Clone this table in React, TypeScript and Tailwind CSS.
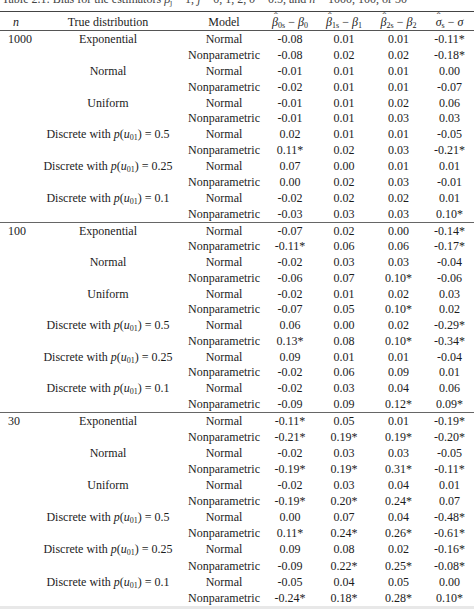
import React from "react";

type Row = {
  n?: string;
  dist?: React.ReactNode;
  model: string;
  vals: string[];
};

const cols = "grid grid-cols-[32px_152px_80px_52px_56px_53px_49px]";

const P = ({ v }: { v: string }) => (
  <span className="whitespace-nowrap">
    Discrete with <i>p</i>(<i>u</i>
    <sub className="text-[8px]">01</sub>) = {v}
  </span>
);

const Hat = ({ sub, base }: { sub: string; base: string }) => (
  <span className="whitespace-nowrap">
    <span className="relative inline-block">
      <i>β</i>
      <span className="absolute left-[2px] -top-[4px] text-[11px] leading-[11px]">ˆ</span>
    </span>
    <sub className="text-[8px]">{sub}</sub> − <i>β</i>
    <sub className="text-[8px]">{base}</sub>
  </span>
);

const dists = (n: string) => [
  { n, dist: "Exponential" },
  {},
  { dist: "Normal" },
  {},
  { dist: "Uniform" },
  {},
  { dist: <P v="0.5" /> },
  {},
  { dist: <P v="0.25" /> },
  {},
  { dist: <P v="0.1" /> },
  {},
];

const data: { n: string; h: string; vals: string[][] }[] = [
  {
    n: "1000",
    h: "h-[15.9px]",
    vals: [
      ["-0.08", "0.01", "0.01", "-0.11*"],
      ["-0.08", "0.02", "0.02", "-0.18*"],
      ["-0.01", "0.01", "0.01", "0.00"],
      ["-0.02", "0.01", "0.01", "-0.07"],
      ["-0.01", "0.01", "0.02", "0.06"],
      ["-0.01", "0.01", "0.03", "0.03"],
      ["0.02", "0.01", "0.01", "-0.05"],
      ["0.11*", "0.02", "0.03", "-0.21*"],
      ["0.07", "0.00", "0.01", "0.01"],
      ["0.00", "0.02", "0.03", "-0.01"],
      ["-0.02", "0.02", "0.02", "0.01"],
      ["-0.03", "0.03", "0.03", "0.10*"],
    ],
  },
  {
    n: "100",
    h: "h-[15.75px]",
    vals: [
      ["-0.07", "0.02", "0.00", "-0.14*"],
      ["-0.11*", "0.06", "0.06", "-0.17*"],
      ["-0.02", "0.03", "0.03", "-0.04"],
      ["-0.06", "0.07", "0.10*", "-0.06"],
      ["-0.02", "0.01", "0.02", "0.03"],
      ["-0.07", "0.05", "0.10*", "0.02"],
      ["0.06", "0.00", "0.02", "-0.29*"],
      ["0.13*", "0.08", "0.10*", "-0.34*"],
      ["0.09", "0.01", "0.01", "-0.04"],
      ["-0.02", "0.06", "0.09", "0.01"],
      ["-0.02", "0.03", "0.04", "0.06"],
      ["-0.09", "0.09", "0.12*", "0.09*"],
    ],
  },
  {
    n: "30",
    h: "h-[16.1px]",
    vals: [
      ["-0.11*", "0.05", "0.01", "-0.19*"],
      ["-0.21*", "0.19*", "0.19*", "-0.20*"],
      ["-0.02", "0.03", "0.03", "-0.05"],
      ["-0.19*", "0.19*", "0.31*", "-0.11*"],
      ["-0.02", "0.03", "0.04", "0.01"],
      ["-0.19*", "0.20*", "0.24*", "0.07"],
      ["0.00", "0.07", "0.04", "-0.48*"],
      ["0.11*", "0.24*", "0.26*", "-0.61*"],
      ["0.09", "0.08", "0.02", "-0.16*"],
      ["-0.09", "0.22*", "0.25*", "-0.08*"],
      ["-0.05", "0.04", "0.05", "0.00"],
      ["-0.24*", "0.18*", "0.28*", "0.10*"],
    ],
  },
];

const Cell = ({ children }: { children?: React.ReactNode }) => (
  <div className="flex items-center justify-center whitespace-nowrap">{children}</div>
);

export default function App() {
  return (
    <div className="w-[474px] h-[609px] overflow-hidden bg-white text-[12px] leading-[14px] text-[#1c1c1c] font-['Liberation_Serif',serif] flex flex-col">
      <div className="h-[11px] overflow-hidden shrink-0">
        <div className="-mt-[8px] pl-[2px] whitespace-nowrap text-[#444]">
          Table 2.1: Bias for the estimators <i>β</i>
          <sub className="text-[8px]">j</sub> = 1, <i>j</i> = 0, 1, 2, <i>σ</i> = 0.5, and <i>n</i> = 1000, 100, or 30
        </div>
      </div>
      <div className="h-px bg-[#444] shrink-0" />
      <div className={`${cols} h-[18px] shrink-0 pt-[2px]`}>
        <Cell>
          <i>n</i>
        </Cell>
        <Cell>True distribution</Cell>
        <Cell>Model</Cell>
        <Cell>
          <Hat sub="0s" base="0" />
        </Cell>
        <Cell>
          <Hat sub="1s" base="1" />
        </Cell>
        <Cell>
          <Hat sub="2s" base="2" />
        </Cell>
        <Cell>
          <span className="whitespace-nowrap">
            <span className="relative inline-block">
              <i>σ</i>
              <span className="absolute left-[1px] -top-[4px] text-[11px] leading-[11px]">ˆ</span>
            </span>
            <sub className="text-[8px]">s</sub> − <i>σ</i>
          </span>
        </Cell>
      </div>
      <div className="h-px bg-[#555] shrink-0" />
      {data.map((sec) => {
        const labels: Row[] = dists(sec.n).map((d, i) => ({
          ...d,
          model: i % 2 === 0 ? "Normal" : "Nonparametric",
          vals: sec.vals[i],
        }));
        return (
          <div key={sec.n} className="shrink-0">
            {labels.map((r, i) => (
              <div key={i} className={`${cols} ${sec.h}`}>
                <div className="flex items-center pl-[8px] whitespace-nowrap">{r.n}</div>
                <Cell>{r.dist}</Cell>
                <Cell>{r.model}</Cell>
                {r.vals.map((v, j) => (
                  <Cell key={j}>{v}</Cell>
                ))}
              </div>
            ))}
            {sec.n !== "30" && <div className="h-px bg-[#666]" />}
          </div>
        );
      })}
      <div className="flex-1 bg-[#e8e8e8]" />
    </div>
  );
}
